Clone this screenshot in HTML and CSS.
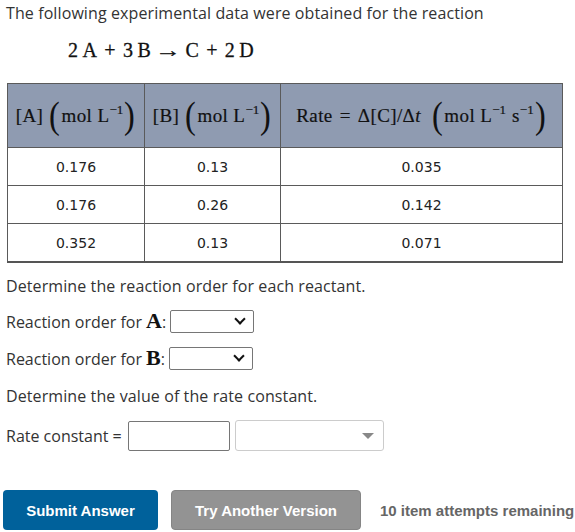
FILE: index.html
```html
<!DOCTYPE html>
<html lang="en">
<head>
    <meta charset="UTF-8">
    <title>Reaction Order</title>
    <link rel="stylesheet" href="styles.css">
</head>
<body>
    <div class="question">
        <p class="intro">The following experimental data were obtained for the reaction</p>
        <div class="equation">2&thinsp;A<span class="op">+</span>3&thinsp;B<span class="op arrow">&rarr;</span>C<span class="op">+</span>2&thinsp;D</div>

        <table class="data">
            <tr>
                <th class="col-a">[A] <span class="paren">(</span>mol&nbsp;L<sup>&minus;1</sup><span class="paren">)</span></th>
                <th class="col-b">[B] <span class="paren">(</span>mol&nbsp;L<sup>&minus;1</sup><span class="paren">)</span></th>
                <th>Rate<span class="rel">=</span>&Delta;[C]/&Delta;<i>t</i>&nbsp; <span class="paren">(</span>mol&nbsp;L<sup>&minus;1</sup><span class="unit-gap">s</span><sup>&minus;1</sup><span class="paren">)</span></th>
            </tr>
            <tr><td>0.176</td><td>0.13</td><td>0.035</td></tr>
            <tr><td>0.176</td><td>0.26</td><td>0.142</td></tr>
            <tr><td>0.352</td><td>0.13</td><td>0.071</td></tr>
        </table>

        <p class="prompt first">Determine the reaction order for each reactant.</p>
        <div class="order-row">
            <label for="order-a">Reaction order for <b class="math">A</b>:</label>
            <span class="select-wrap">
                <select id="order-a" class="order-select"><option></option><option>0</option><option>1</option><option>2</option></select>
                <span class="chevron"></span>
            </span>
        </div>
        <div class="order-row second">
            <label for="order-b">Reaction order for <b class="math">B</b>:</label>
            <span class="select-wrap">
                <select id="order-b" class="order-select"><option></option><option>0</option><option>1</option><option>2</option></select>
                <span class="chevron"></span>
            </span>
        </div>

        <p class="prompt">Determine the value of the rate constant.</p>
        <div class="rate-row">
            <label for="rate-k">Rate constant =</label>
            <input type="text" id="rate-k" class="rate-input">
            <div class="unit-select"><span class="unit-arrow"></span></div>
        </div>

        <div class="actions">
            <button class="btn btn-submit">Submit Answer</button>
            <button class="btn btn-try">Try Another Version</button>
            <span class="attempts">10 item attempts remaining</span>
        </div>
    </div>
</body>
</html>
```

FILE: styles.css
```css
body {
    margin: 0;
    background-color: #fff;
    font-family: "Open Sans", sans-serif;
    font-size: 16px;
    color: #333;
}
.question {
    padding: 0 0 0 6px;
}
.intro {
    margin: 0;
    padding-top: 3px;
    line-height: 20px;
    letter-spacing: 0.1px;
}
.equation {
    margin-top: 15px;
    padding-left: 62px;
    font-family: "Liberation Serif", serif;
    font-size: 20px;
    line-height: 24px;
    letter-spacing: 0.3px;
    color: #111;
    -webkit-text-stroke: 0.3px #111;
}
.op {
    margin: 0 7px;
}
.arrow {
    display: inline-block;
    transform: scaleX(1.3);
}
.data {
    margin: 21px 0 0 1px;
    width: 556px;
    border-collapse: collapse;
    border: 1px solid #555;
    border-bottom: 2px solid #555;
}
.data th {
    height: 63px;
    padding: 0;
    background-color: #8f9bb1;
    border: 1px solid #5a5a5a;
    font-family: "Liberation Serif", serif;
    font-weight: normal;
    font-size: 19px;
    letter-spacing: 0.4px;
    color: #111;
    white-space: nowrap;
    -webkit-text-stroke: 0.2px #111;
}
.data th.col-a {
    width: 136px;
}
.data th.col-b {
    width: 135px;
}
.data th sup {
    font-size: 13px;
    vertical-align: 8px;
    line-height: 0;
    letter-spacing: 0;
}
.rel {
    margin: 0 7px;
}
.unit-gap {
    margin-left: 6px;
}
.paren {
    display: inline-block;
    font-family: "Liberation Serif", serif;
    font-size: 38px;
    font-weight: 300;
    line-height: 20px;
    vertical-align: -6px;
    transform: scaleX(0.85);
    -webkit-text-stroke: 0;
}
.data td {
    height: 37px;
    padding: 0;
    border: 1px solid #5a5a5a;
    text-align: center;
    font-family: "DejaVu Sans", Verdana, sans-serif;
    font-size: 14px;
    color: #222;
}
.prompt {
    margin: 12px 0 0 0;
    line-height: 22px;
    letter-spacing: 0.1px;
}
.order-row {
    margin-top: 12px;
    display: flex;
    align-items: center;
    height: 24px;
}
.order-row.second {
    margin-top: 13px;
}
.order-row + .prompt {
    margin-top: 15px;
}
.math {
    font-family: "Liberation Serif", serif;
    font-size: 22px;
    color: #111;
}
.select-wrap {
    position: relative;
    margin-left: 4px;
    display: inline-block;
    height: 23px;
}
.order-select {
    -webkit-appearance: none;
    appearance: none;
    width: 84px;
    height: 23px;
    border: 1px solid #767676;
    border-radius: 2px;
    background-color: #fff;
    font-size: 14px;
}
.chevron {
    position: absolute;
    right: 10px;
    top: 5px;
    width: 6px;
    height: 6px;
    border-right: 2px solid #111;
    border-bottom: 2px solid #111;
    transform: rotate(45deg);
    pointer-events: none;
}
.rate-row {
    margin-top: 13px;
    display: flex;
    align-items: center;
    height: 31px;
}
.rate-input {
    margin-left: 6px;
    width: 102px;
    height: 30px;
    box-sizing: border-box;
    border: 1px solid #767676;
    border-radius: 2px;
    padding: 0 4px;
}
.unit-select {
    position: relative;
    margin-left: 5px;
    width: 149px;
    height: 31px;
    box-sizing: border-box;
    border: 1px solid #ccc;
    border-radius: 3px;
    background-color: #fff;
}
.unit-arrow {
    position: absolute;
    right: 9px;
    top: 12px;
    border-left: 6px solid transparent;
    border-right: 6px solid transparent;
    border-top: 6px solid #888;
}
.actions {
    margin-top: 39px;
    display: flex;
    align-items: center;
    margin-left: -3px;
}
.btn {
    height: 40px;
    border: none;
    border-radius: 4px;
    color: #fff;
    font-family: "Liberation Sans", Arial, sans-serif;
    font-weight: bold;
    font-size: 15px;
    cursor: pointer;
}
.btn-submit {
    width: 155px;
    background-color: #00619b;
}
.btn-try {
    margin-left: 13px;
    width: 190px;
    background-color: #939393;
    border: 1px solid #858585;
}
.attempts {
    margin-left: 19px;
    font-family: "Liberation Sans", Arial, sans-serif;
    font-weight: bold;
    font-size: 15px;
    color: #666;
    white-space: nowrap;
}
```
